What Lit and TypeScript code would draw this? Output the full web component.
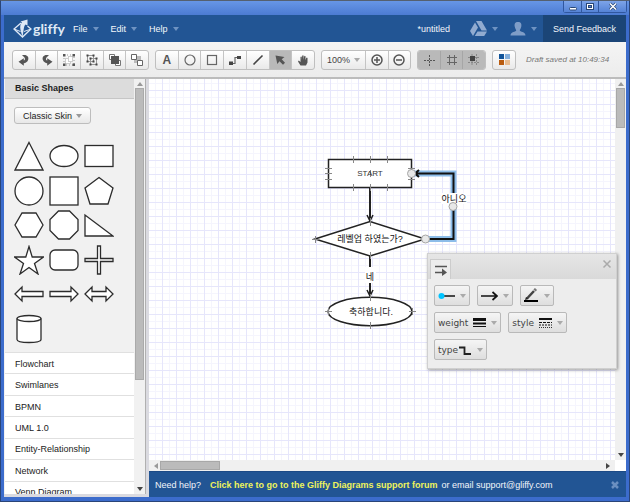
import { LitElement, html, svg, css } from "lit";
import { customElement } from "lit/decorators.js";
import { classMap } from "lit/directives/class-map.js";

const arrow = html`<svg class="caret" width="6" height="4" viewBox="0 0 6 4" aria-hidden="true"><path d="M0 0H6L3 4Z" fill="currentColor" /></svg>`;

const icon = (body: unknown, w = 14, h = 14) =>
  html`<svg width=${w} height=${h} viewBox="0 0 ${w} ${h}" fill="none" aria-hidden="true">${body}</svg>`;

interface Tool {
  label: string;
  art: unknown;
  active?: boolean;
}

const editTools: Tool[] = [
  { label: "Undo", art: icon(svg`<path d="M5 2.500C9.500 1 12.500 4 11 7.200C10.300 9 8.500 10 6.800 10.200V12.800L1.500 8.800L6.800 5.300V7.600C8.600 7 8.600 4.500 5 2.500Z" fill="#555"/>`) },
  { label: "Redo", art: icon(svg`<path d="M9 2.500C4.500 1 1.500 4 3 7.200C3.700 9 5.500 10 7.200 10.200V12.800L12.500 8.800L7.200 5.300V7.600C5.400 7 5.400 4.500 9 2.500Z" fill="#555"/>`) },
  { label: "Group", art: icon(svg`<rect x="3.500" y="5.500" width="5" height="5" fill="#fff" stroke="#ccc"/><rect x="6.500" y="3.500" width="4" height="5" fill="#fff" stroke="#ccc"/><path d="M2 2h10v10H2Z" stroke="#999" stroke-dasharray="1 2"/><path d="M1 1h2.500v2.500H1ZM10.500 1H13v2.500h-2.500ZM1 10.500h2.500V13H1ZM10.500 10.500H13V13h-2.500Z" fill="#555"/>`) },
  { label: "Ungroup", art: icon(svg`<path d="M2.500 2.500h6v6h-6ZM5.500 5.500h6v6h-6Z" stroke="#999"/><path d="M1.500 1.500h2v2h-2ZM7.500 1.500h2v2h-2ZM1.500 7.500h2v2h-2ZM4.500 4.500h2v2h-2ZM10.500 4.500h2v2h-2ZM4.500 10.500h2v2h-2ZM10.500 10.500h2v2h-2ZM7.500 7.500h2v2h-2Z" fill="#444"/>`) },
  { label: "Bring to front", art: icon(svg`<path d="M1.500 1.500h5v5h-5ZM7.500 7.500h5v5h-5Z" fill="#fff" stroke="#777"/><rect x="3" y="3" width="8" height="8" fill="#555"/>`) },
  { label: "Send to back", art: icon(svg`<rect x="4" y="3" width="7" height="7" fill="#bbb"/><path d="M1.500 1.500h5v5h-5ZM7.500 7.500h5v5h-5Z" fill="#fff" stroke="#666"/>`) },
];

const drawTools: Tool[] = [
  { label: "Text", art: html`<span class="glyph">A</span>` },
  { label: "Ellipse", art: icon(svg`<circle cx="7" cy="7" r="5" stroke="#666" stroke-width="1.200"/>`) },
  { label: "Rectangle", art: icon(svg`<rect x="2.500" y="2.500" width="9" height="9" stroke="#666" stroke-width="1.200"/>`) },
  { label: "Connector", art: icon(svg`<path d="M3 10.500H7V4.500H11" stroke="#666" stroke-width="1.200"/><path d="M1 8.500h4v3.500H1ZM9 3h4v3H9Z" fill="#444"/>`) },
  { label: "Line", art: icon(svg`<path d="M2.500 11.500L11.500 2.500" stroke="#444" stroke-width="1.600"/>`) },
  { label: "Select", active: true, art: icon(svg`<path d="M2.500 2.500L11.500 4L8.700 6.300L12 9.800L10 11.800L6.500 8.300L4.300 11Z" fill="#555"/>`) },
  { label: "Pan", art: icon(svg`<path d="M4.500 12.500L2 8.500L2.800 7.600L4.500 9V4Q5.200 3 5.800 4V7L6.200 2.800Q7 1.600 7.600 2.800V7L8.200 3.200Q9 2.200 9.500 3.200V7.300L10.200 5Q11 4.200 11.500 5V9.500L10 12.500Z" fill="#555"/>`) },
];

const snapTools: Tool[] = [
  { label: "Show guides", active: true, art: icon(svg`<path d="M7.500 2V13M2 7.500H13" stroke="#555" stroke-dasharray="2 1"/>`) },
  { label: "Show grid", active: true, art: icon(svg`<path d="M4.500 2V12M9.500 2V12M2 4.500H12M2 9.500H12" stroke="#666"/>`) },
  { label: "Snap to grid", active: true, art: icon(svg`<path d="M5 1V12M9.500 1V12M1 4.500H13M1 9.500H13" stroke="#888" stroke-dasharray="2 1"/><rect x="3" y="3" width="5" height="5" fill="#444"/>`) },
];

const shapes: { name: string; art: unknown }[] = [
  { name: "Triangle", art: svg`<path d="M15 1.500L29 29H1Z"/>` },
  { name: "Ellipse", art: svg`<ellipse cx="15" cy="15" rx="14" ry="10.500"/>` },
  { name: "Rectangle", art: svg`<rect x="1" y="4.500" width="28" height="21"/>` },
  { name: "Circle", art: svg`<circle cx="15" cy="15" r="14"/>` },
  { name: "Square", art: svg`<rect x="1" y="1" width="28" height="28"/>` },
  { name: "Pentagon", art: svg`<path d="M15 1.500L29 12L24 28H6L1 12Z"/>` },
  { name: "Hexagon", art: svg`<path d="M8 3H22L29 15L22 27H8L1 15Z"/>` },
  { name: "Octagon", art: svg`<path d="M9.500 1H20.500L29 9.500V20.500L20.500 29H9.500L1 20.500V9.500Z"/>` },
  { name: "Right triangle", art: svg`<path d="M1 5V26H29Z"/>` },
  { name: "Star", art: svg`<path d="M15 1.500L18.200 12H29.500L20.500 18.500L24 29L15 22.500L6 29L9.500 18.500L0.500 12H11.800Z"/>` },
  { name: "Rounded rectangle", art: svg`<rect x="1" y="5" width="28" height="20" rx="5"/>` },
  { name: "Cross", art: svg`<path d="M13.500 1H16.500V13.500H29V16.500H16.500V29H13.500V16.500H1V13.500H13.500Z"/>` },
  { name: "Left arrow", art: svg`<path d="M1 15L8 8V12.500H29V17.500H8V22Z"/>` },
  { name: "Right arrow", art: svg`<path d="M29 15L22 8V12.500H1V17.500H22V22Z"/>` },
  { name: "Double arrow", art: svg`<path d="M1 15L8 8V12.500H22V8L29 15L22 22V17.500H8V22Z"/>` },
  { name: "Cylinder", art: svg`<path d="M3 4.500V25.500C3 29.500 27 29.500 27 25.500V4.500"/><ellipse cx="15" cy="4.500" rx="12" ry="3"/>` },
];

const libraries = ["Flowchart", "Swimlanes", "BPMN", "UML 1.0", "Entity-Relationship", "Network", "Venn Diagram"];

const base = css`
  * { box-sizing: border-box; }
  button {
    font: inherit;
    color: inherit;
    border: 0;
    padding: 0;
    margin: 0;
    background: none;
    display: flex;
    align-items: center;
    justify-content: center;
  }
  svg { display: block; flex: none; }
`;

@customElement("window-bar")
class WindowBar extends LitElement {
  static styles = [base, css`
    :host { display: flex; justify-content: flex-end; height: 14px; padding-right: 2px; background: linear-gradient(#6796e6, #4c7bd2); }
    .controls { display: flex; height: 12px; border: 1px solid #30579f; border-top: 0; border-radius: 0 0 3px 3px; }
    button { width: 17px; background: linear-gradient(#7da4e8, #5583d6); }
    button + button { border-left: 1px solid #30579f; }
    button:last-child { width: 28px; }
  `];
  render() {
    return html`<div class="controls">
      <button aria-label="Minimize">${icon(svg`<rect x="1.500" y="5.500" width="7" height="2.500" rx="1" fill="#fff" stroke="#294777"/>`, 10, 10)}</button>
      <button aria-label="Maximize">${icon(svg`<rect x="1.500" y="1.500" width="7" height="6" fill="#fff" stroke="#294777"/><rect x="3.500" y="3.500" width="3" height="2" fill="#5583d6" stroke="#294777"/>`, 10, 10)}</button>
      <button aria-label="Close">${icon(svg`<path d="M2 1.500L8 7.500M8 1.500L2 7.500" stroke="#294777" stroke-width="3"/><path d="M2 1.500L8 7.500M8 1.500L2 7.500" stroke="#fff" stroke-width="1.500"/>`, 10, 10)}</button>
    </div>`;
  }
}

@customElement("app-header")
class AppHeader extends LitElement {
  static styles = [base, css`
    :host { display: flex; align-items: center; height: 27px; background: #225594; color: #f4f7fb; padding-left: 9px; }
    .logo { display: flex; align-items: center; gap: 1px; color: #dfe9f6; text-decoration: none; width: 60px; }
    .word { font: 700 14px/20px Lato, sans-serif; font-variant-ligatures: none; }
    nav { display: flex; gap: 12px; }
    .menu { gap: 5px; }
    .caret { color: #6f93c2; }
    .right { display: flex; align-items: center; margin-left: auto; height: 100%; }
    .title { margin-right: 20px; }
    .account { gap: 5px; margin-right: 12px; }
    .account + .account { margin-right: 6px; }
    .feedback { height: 100%; width: 83px; background: #1b4577; }
  `];
  render() {
    return html`
      <a class="logo" href="#" aria-label="Gliffy home">
        ${icon(svg`<path d="M8 4L1 10L9.500 18L18 10L14.500 7" stroke="#dfe9f6" stroke-width="1.300"/><path d="M9.500 18L7.500 11C6.800 7 7.500 4.500 9 3.500L7.500 2.500L14.500 0.500L14.500 6.500L12.500 5.500C10.500 7 10.800 12 9.500 18Z" fill="#dfe9f6"/><path d="M1 10L7.500 12.500M18 10L11 12.500" stroke="#dfe9f6"/>`, 19, 20)}
        <span class="word">gliffy</span>
      </a>
      <nav>
        ${["File", "Edit", "Help"].map((m) => html`<button class="menu">${m}${arrow}</button>`)}
      </nav>
      <div class="right">
        <span class="title">*untitled</span>
        <button class="account" aria-label="Google Drive">
          ${icon(svg`<path d="M6 1H11.500L17 10.500H11.500ZM5 2.500L8 7.500L3 16L0 11ZM7.500 11.500H17L14.200 16H4.800Z" fill="#91abd0"/>`, 17, 17)}${arrow}
        </button>
        <button class="account" aria-label="Account">
          ${icon(svg`<path d="M8 1C11 1 11.800 3 11.300 5.500C11 7.500 9.800 8.500 9.800 9.500C9.800 11 15.500 10.500 15.500 14.500H0.500C0.500 10.500 6.200 11 6.200 9.500C6.200 8.500 5 7.500 4.700 5.500C4.200 3 5 1 8 1Z" fill="#7f9dc7"/>`, 16, 16)}${arrow}
        </button>
        <button class="feedback">Send Feedback</button>
      </div>`;
  }
}

@customElement("tool-bar")
class ToolBar extends LitElement {
  static styles = [base, css`
    :host { display: flex; align-items: center; gap: 6px; height: 37px; padding-left: 8px; background: linear-gradient(#f4f4f4, #ececec); border-bottom: 2px solid #bcbcbc; color: #444; white-space: nowrap; }
    .group { display: flex; height: 20px; border: 1px solid #bfbfbf; border-radius: 3px; background: linear-gradient(#fff, #e9e9e9); overflow: hidden; flex: none; }
    .edit { width: 137px; }
    .draw { width: 160px; }
    .zoom { width: 90px; }
    .snap { width: 69px; }
    .theme { width: 24px; }
    button { flex: 1; min-width: 0; }
    button + button { border-left: 1px solid #c4c4c4; }
    .on { background: #b9b9b9; }
    .snap button + button { border-left-color: #a6a6a6; }
    .level { flex: none; width: 43px; gap: 4px; }
    .caret { color: #aaa; }
    .glyph { font: 700 12px/14px "Liberation Sans", sans-serif; color: #555; }
    .status { margin-left: 4px; font-size: 8px; font-style: italic; color: #777; }
  `];
  tools(kind: string, list: Tool[]) {
    return html`<div class="group ${kind}">
      ${list.map((t) => html`<button class=${classMap({ on: !!t.active })} aria-label=${t.label}>${t.art}</button>`)}
    </div>`;
  }
  render() {
    return html`
      ${this.tools("edit", editTools)}
      ${this.tools("draw", drawTools)}
      <div class="group zoom">
        <button class="level">100%${arrow}</button>
        <button aria-label="Zoom in">${icon(svg`<circle cx="7" cy="7" r="5" stroke="#555" stroke-width="1.500"/><path d="M4 7H10M7 4V10" stroke="#555" stroke-width="1.500"/>`)}</button>
        <button aria-label="Zoom out">${icon(svg`<circle cx="7" cy="7" r="5" stroke="#555" stroke-width="1.500"/><path d="M4 7H10" stroke="#555" stroke-width="1.500"/>`)}</button>
      </div>
      ${this.tools("snap", snapTools)}
      <div class="group theme">
        <button aria-label="Theme">${icon(svg`<path d="M0 0H5V5H0Z" fill="#12549a"/><path d="M6 0H11V5H6Z" fill="#86b0dc"/><path d="M0 6H5V11H0Z" fill="#b95c10"/><path d="M6 6H11V11H6Z" fill="#e9bd92"/>`, 11, 11)}</button>
      </div>
      <span class="status">Draft saved at 10:49:34</span>`;
  }
}

@customElement("shape-library")
class ShapeLibrary extends LitElement {
  static styles = [base, css`
    :host { display: flex; min-height: 0; overflow: hidden; padding-left: 1px; background: #f1f1f1; color: #222; border-right: 3px solid #dadae0; border-bottom: 3px solid #dadae0; }
    .content { flex: 1; min-width: 0; overflow: hidden; }
    h2 { margin: 0; height: 20px; padding-left: 10px; font-size: 9px; line-height: 18px; background: #dcdcdc; border-bottom: 1px solid #c6c6c6; }
    .skin { margin: 8px 0 0 9px; width: 77px; height: 17px; gap: 4px; border: 1px solid #bdbdbd; border-radius: 3px; background: linear-gradient(#fff, #e8e8e8); }
    .caret { color: #999; }
    .shapes { display: grid; grid-template: repeat(6, 1fr) / repeat(3, 1fr); margin: 15px 0 0 7px; width: 104px; height: 207px; }
    .shapes svg { fill: #fff; stroke: #2c2c2c; stroke-width: 1.3px; }
    ul { display: grid; grid-auto-rows: 1fr; height: 150px; margin: 6px 0 0; padding: 0; list-style: none; background: #fff; }
    li { border-top: 1px solid #e0e0e0; display: flex; align-items: center; padding: 1px 0 0 10px; }
    li a { color: inherit; text-decoration: none; }
    .scroll { display: flex; flex-direction: column; align-items: center; width: 12px; border-right: 1px solid #b0b0b0; padding: 3px 0; color: #999; }
    .thumb { width: 9px; height: 292px; margin-top: 2px; background: #bbb; border: 1px solid #aaa; }
    .down { margin-top: auto; color: #444; }
    .down .caret { color: #444; }
    .up { transform: rotate(180deg); }
  `];
  render() {
    return html`
      <div class="content">
        <h2>Basic Shapes</h2>
        <button class="skin">Classic Skin${arrow}</button>
        <div class="shapes">
          ${shapes.map((s) => html`<button aria-label=${s.name}><svg width="30" height="30" viewBox="0 0 30 30">${s.art}</svg></button>`)}
        </div>
        <ul>${libraries.map((l) => html`<li><a href="#">${l}</a></li>`)}</ul>
      </div>
      <div class="scroll"><span class="up">${arrow}</span><div class="thumb"></div><span class="down">${arrow}</span></div>`;
  }
}

@customElement("line-panel")
class LinePanel extends LitElement {
  static styles = [base, css`
    :host { display: block; background: #ededed; border: 1px solid #d0d0d0; box-shadow: 1px 1px 3px #0006; font: 9px/14px "DejaVu Sans", sans-serif; color: #444; }
    header { display: flex; justify-content: space-between; align-items: flex-start; height: 25px; padding: 5px 4px 0 2px; background: linear-gradient(#e6e6e6, #d9d9d9); }
    .tab { width: 21px; height: 20px; background: #ededed; border: 1px solid #ccc; border-bottom: 0; }
    .rows { display: flex; flex-direction: column; gap: 6px; padding: 6px 6px 8px; }
    .row { display: flex; gap: 7px; }
    .row button { height: 21px; gap: 5px; padding: 0 3px; border: 1px solid #b9b9b9; border-radius: 2px; background: linear-gradient(#f5f5f5, #dedede); }
    .row .tight { gap: 1px; }
    .row .tight .caret { margin-left: 4px; }
    .caret { color: #aaa; }
  `];
  render() {
    return html`
      <header>
        <button class="tab" aria-label="Line">${icon(svg`<path d="M1 3.500H13M1 9.500H9" stroke="#555" stroke-width="1.500"/><path d="M8 5.500L13 9.500L8 13Z" fill="#555"/>`)}</button>
        <button aria-label="Close">${icon(svg`<path d="M1.500 1.500L8.500 8.500M8.500 1.500L1.500 8.500" stroke="#aaa" stroke-width="1.500"/>`, 10, 10)}</button>
      </header>
      <div class="rows">
        <div class="row">
          <button aria-label="Line start">${icon(svg`<path d="M4 7H17" stroke="#111" stroke-width="1.500"/><circle cx="3.500" cy="7" r="3" fill="#00c4ff"/>`, 17)}${arrow}</button>
          <button aria-label="Line end">${icon(svg`<path d="M0 7H16M11.500 3L16 7L11.500 11" stroke="#111" stroke-width="1.700"/>`, 17)}${arrow}</button>
          <button class="tight" aria-label="Line colour">${icon(svg`<path d="M0 13H14" stroke="#000" stroke-width="2"/><path d="M3 10.500L10 3" stroke="#444" stroke-width="2.500"/><path d="M10.500 2.500L12 1" stroke="#777" stroke-width="3"/><path d="M1 12L2 9L4.500 11Z" fill="#222"/>`, 15, 15)}${arrow}</button>
        </div>
        <div class="row">
          <button>weight ${icon(svg`<path d="M0 2.500H13" stroke="#111" stroke-width="3"/><path d="M0 6.500H13" stroke="#111" stroke-width="2"/><path d="M0 9.500H13" stroke="#111"/>`, 13, 12)}${arrow}</button>
          <button>style ${icon(svg`<path d="M0 2H13" stroke="#111" stroke-width="2"/><path d="M0 5.500H13" stroke="#111" stroke-dasharray="3 1"/><path d="M0 8H13" stroke="#111" stroke-dasharray="2 1"/><path d="M0 10.500H13" stroke="#333" stroke-dasharray="1 1"/>`, 13, 12)}${arrow}</button>
        </div>
        <div class="row">
          <button class="tight">type ${icon(svg`<path d="M0 3.500H5.500V10H12" stroke="#222" stroke-width="1.800"/>`, 13, 12)}${arrow}</button>
        </div>
      </div>`;
  }
}

@customElement("diagram-canvas")
class DiagramCanvas extends LitElement {
  static styles = [base, css`
    :host { display: grid; grid-template: minmax(0, 1fr) 11px / minmax(0, 1fr) 11px; position: relative; min-width: 0; min-height: 0; background: #fff; }
    .diagram { width: 100%; height: 100%; overflow: hidden; }
    text { font: 9px "Liberation Sans", "Noto Sans CJK KR", sans-serif; text-anchor: middle; fill: #111; }
    .start { font-size: 8px; fill: #333; }
    .bar { display: flex; align-items: center; background: #f0f0f0; color: #999; }
    .vertical { flex-direction: column; padding: 3px 0; }
    .horizontal { padding: 0 4px; }
    .vertical .thumb { width: 9px; height: 40px; margin-top: 2px; }
    .horizontal .thumb { width: 60px; height: 9px; margin-left: 1px; }
    .thumb { background: #bbb; border: 1px solid #a8a8a8; }
    .end { margin-left: auto; transform: rotate(-90deg); color: #444; }
    .bottom { margin-top: auto; color: #444; }
    .up { transform: rotate(180deg); }
    .back { transform: rotate(90deg); }
    line-panel { position: absolute; left: 278px; top: 174px; width: 190px; }
  `];
  render() {
    return html`
      <svg class="diagram" role="img" aria-label="Flowchart">
        <defs>
          <pattern id="grid" x="-1" y="-3" width="14" height="14" patternUnits="userSpaceOnUse">
            <path d="M7.500 0V14M0 7.500H14" stroke="#f5f5fd" />
            <path d="M0.500 0V14M0 0.500H14" stroke="#e6e6fb" />
          </pattern>
        </defs>
        <rect width="100%" height="100%" fill="url(#grid)" />
        <g transform="translate(-149 -79)" fill="#fff" stroke="#222" stroke-width="1.5">
          <path d="M370 187V220" stroke-width="2" />
          <path d="M370 256V296" stroke-width="2" />
          <path d="M367 215L370 221L373 215M367 290L370 296L373 290" fill="none" />
          <rect x="328.500" y="159.500" width="83" height="28" />
          <path d="M315 239L370 221.500L425 239L370 256Z" />
          <ellipse cx="370" cy="311.500" rx="42" ry="14.200" />
          <path d="M353.500 156V163M370.500 156V163M387.500 156V163M353.500 184V191M370.500 184V191M387.500 184V191M325 168.500H332M325 173.500H332M325 179.500H332M408 168.500H415M408 179.500H415M312 239.500H319M315.500 236V243M370.500 218V226M370.500 252V259M325 311.500H332M328.500 308V315M409 311.500H416M412.500 308V315M370.500 294V301M370.500 322V329M370.500 170V177" stroke="#888" stroke-width="1" />
          <path d="M425 239H453.500V173.500H412" fill="none" stroke="#8dbde9" stroke-width="6" />
          <path d="M425 239H453.500V173.500H415M419 170L415 173.500L419 177" fill="none" stroke="#111" stroke-width="2" />
          <path d="M441 193H467V204H441ZM365 267H376V283H365Z" stroke="none" />
          <g fill="#e8e8e8" stroke="#a5a5a5" stroke-width="1">
            <circle cx="411.500" cy="173.500" r="4" /><circle cx="453" cy="206.500" r="4" /><circle cx="425.500" cy="239" r="4" />
          </g>
          <g stroke="none">
            <text class="start" x="370" y="176">START</text>
            <text x="370" y="242">레벨업 하였는가?</text>
            <text x="454" y="202">아니오</text>
            <text x="370" y="280">네</text>
            <text x="371" y="315">축하합니다.</text>
          </g>
        </g>
      </svg>
      <div class="bar vertical"><span class="up">${arrow}</span><div class="thumb"></div><span class="bottom">${arrow}</span></div>
      <div class="bar horizontal"><span class="back">${arrow}</span><div class="thumb"></div><span class="end">${arrow}</span></div>
      <line-panel></line-panel>`;
  }
}

@customElement("help-bar")
class HelpBar extends LitElement {
  static styles = [base, css`
    :host { display: flex; align-items: center; height: 26px; padding: 0 6px; background: #225594; color: #f2f6fb; white-space: nowrap; border-top: 1px solid #1c4a86; }
    a { margin: 0 4px 0 9px; color: #eef35c; font-weight: 700; text-decoration: none; }
    button { margin-left: auto; }
  `];
  render() {
    return html`<span>Need help?</span><a href="#">Click here to go to the Gliffy Diagrams support forum</a><span>or email support@gliffy.com</span>
      <button aria-label="Close">${icon(svg`<path d="M2 2L8 8M8 2L2 8" stroke="#6b8fc0" stroke-width="2.500"/>`, 10, 10)}</button>`;
  }
}

@customElement("app-root")
class AppRoot extends LitElement {
  static styles = [base, css`
    :host { display: block; height: 100vh; font: 9px/12px "Liberation Sans", "Noto Sans CJK KR", sans-serif; background: #3c6ccc; }
    .window { display: flex; flex-direction: column; height: 100%; border: 1px solid #2a4578; border-top-color: #55606f; }
    .frame { flex: 1; min-height: 0; display: flex; flex-direction: column; margin: 0 3px 4px; }
    .work { flex: 1; min-height: 0; display: grid; grid-template-columns: 145px minmax(0, 1fr); }
    .main { display: flex; flex-direction: column; min-width: 0; min-height: 0; }
    diagram-canvas { flex: 1; }
  `];
  render() {
    return html`<div class="window">
      <window-bar></window-bar>
      <div class="frame">
        <app-header></app-header>
        <tool-bar></tool-bar>
        <div class="work">
          <shape-library></shape-library>
          <div class="main"><diagram-canvas></diagram-canvas><help-bar></help-bar></div>
        </div>
      </div>
    </div>`;
  }
}
